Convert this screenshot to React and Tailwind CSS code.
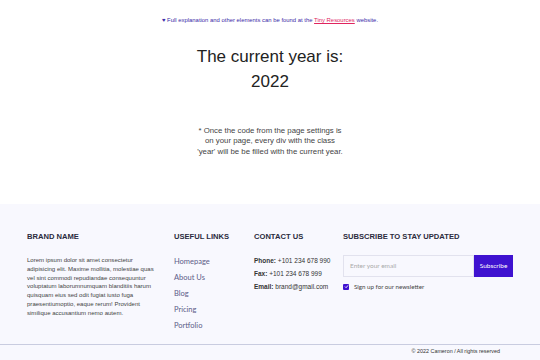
import React from "react";

const links = ["Homepage", "About Us", "Blog", "Pricing", "Portfolio"];

const App = () => {
  return (
    <div className="w-[540px] h-[360px] bg-white flex flex-col font-['Liberation_Sans',Arial,sans-serif] overflow-hidden">
      <div className="h-[204px] flex flex-col items-center">
        <p className="mt-[16px] text-[5.9px] leading-[8px] text-[#3b2aa8]">
          ♥ Full explanation and other elements can be found at the{" "}
          <span className="text-[#e0245e] underline">Tiny Resources</span> website.
        </p>
        <h1 className="mt-[22px] text-[17px] leading-[22px] text-[#222]">The current year is:</h1>
        <div className="text-[17px] leading-[24px] mt-[2px] text-[#222]">2022</div>
        <p className="mt-[32px] w-[150px] text-center text-[7.8px] leading-[10.4px] text-[#444]">
          * Once the code from the page settings is on your page, every div with the class 'year' will be be filled with the current year.
        </p>
      </div>

      <footer className="flex-1 bg-[#f8f8fe] flex flex-col">
        <div className="flex pt-[27px] pl-[27px] h-[140px]">
          <div className="w-[147px]">
            <h3 className="text-[7.6px] leading-[12px] font-bold text-[#2b2b3d]">BRAND NAME</h3>
            <p className="mt-[13px] w-[128px] text-[6.05px] leading-[8.8px] text-[#444]">
              Lorem ipsum dolor sit amet consectetur adipisicing elit. Maxime mollitia, molestiae quas vel sint commodi repudiandae consequuntur voluptatum laborumnumquam blanditiis harum quisquam eius sed odit fugiat iusto fuga praesentiumoptio, eaque rerum! Provident similique accusantium nemo autem.
            </p>
          </div>
          <div className="w-[80px]">
            <h3 className="text-[7.6px] leading-[12px] font-bold text-[#2b2b3d]">USEFUL LINKS</h3>
            <ul className="mt-[14px] flex flex-col gap-[6px] font-['Lato',sans-serif] text-[7.5px] leading-[10px] text-[#5c5c88]">
              {links.map((l) => (
                <li key={l}>{l}</li>
              ))}
            </ul>
          </div>
          <div className="w-[89px]">
            <h3 className="text-[7.6px] leading-[12px] font-bold text-[#2b2b3d]">CONTACT US</h3>
            <div className="mt-[13px] flex flex-col gap-[4px] text-[6.5px] leading-[9px] text-[#333]">
              <p><b>Phone:</b> +101 234 678 990</p>
              <p><b>Fax:</b> +101 234 678 999</p>
              <p><b>Email:</b> brand@gmail.com</p>
            </div>
          </div>
          <div>
            <h3 className="text-[7.6px] leading-[12px] font-bold text-[#2b2b3d]">SUBSCRIBE TO STAY UPDATED</h3>
            <div className="mt-[12px] flex h-[22px] w-[170px]">
              <div className="flex-1 border border-[#e2e2ee] bg-[#f8f8fe] flex items-center pl-[6px] font-['Lato',sans-serif] text-[6.5px] text-[#aaa]">
                Enter your email
              </div>
              <button className="w-[39px] bg-[#3f12d0] text-white font-['Lato',sans-serif] text-[6.5px]">Subscribe</button>
            </div>
            <label className="mt-[5px] flex items-center gap-[5px] font-['Lato',sans-serif] text-[6.2px] text-[#444]">
              <span className="w-[6px] h-[6px] rounded-[1px] bg-[#3f12d0] flex items-center justify-center">
                <svg viewBox="0 0 10 10" className="w-[5px] h-[5px]">
                  <path d="M2 5.2 L4.2 7.4 L8 2.8" stroke="white" strokeWidth="1.8" fill="none" />
                </svg>
              </span>
              Sign up for our newsletter
            </label>
          </div>
        </div>
        <div className="border-t border-[#c9cce0] flex justify-end pr-[40px] pt-[2px]">
          <p className="text-[5.4px] leading-[8px] text-[#333]">© 2022 Cameron / All rights reserved</p>
        </div>
      </footer>
    </div>
  );
};

export default App;
